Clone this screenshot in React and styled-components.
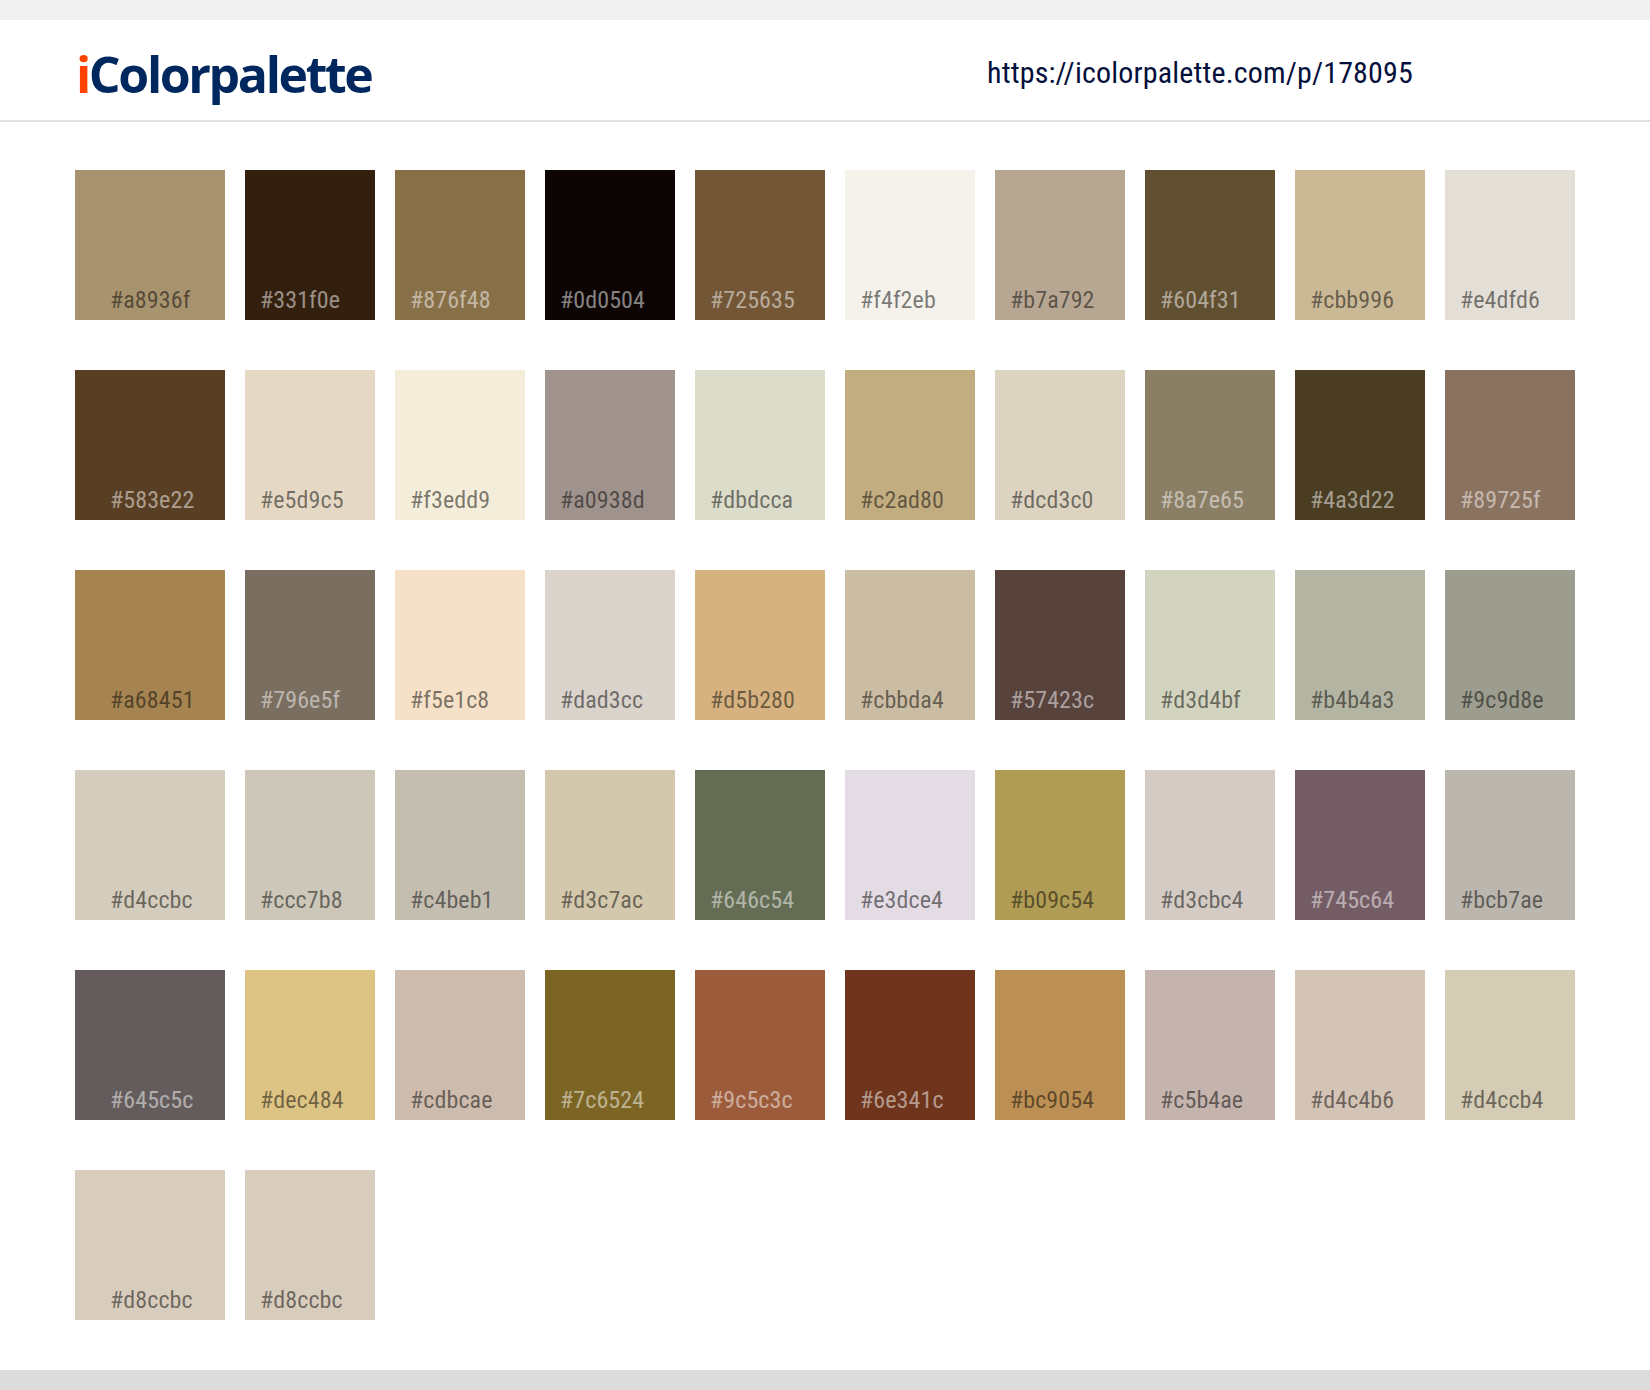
import styled, { createGlobalStyle } from 'styled-components';

const COLORS = [
  'a8936f', '331f0e', '876f48', '0d0504', '725635', 'f4f2eb', 'b7a792', '604f31', 'cbb996', 'e4dfd6',
  '583e22', 'e5d9c5', 'f3edd9', 'a0938d', 'dbdcca', 'c2ad80', 'dcd3c0', '8a7e65', '4a3d22', '89725f',
  'a68451', '796e5f', 'f5e1c8', 'dad3cc', 'd5b280', 'cbbda4', '57423c', 'd3d4bf', 'b4b4a3', '9c9d8e',
  'd4ccbc', 'ccc7b8', 'c4beb1', 'd3c7ac', '646c54', 'e3dce4', 'b09c54', 'd3cbc4', '745c64', 'bcb7ae',
  '645c5c', 'dec484', 'cdbcae', '7c6524', '9c5c3c', '6e341c', 'bc9054', 'c5b4ae', 'd4c4b6', 'd4ccb4',
  'd8ccbc', 'd8ccbc',
];

function isDark(hex) {
  const r = parseInt(hex.slice(0, 2), 16);
  const g = parseInt(hex.slice(2, 4), 16);
  const b = parseInt(hex.slice(4, 6), 16);
  return 0.299 * r + 0.587 * g + 0.114 * b < 130;
}

export default function App() {
  return (
    <>
      <GlobalStyle />
      <TopStrip />
      <Header>
        <Logo><LogoDot>i</LogoDot>Colorpalette</Logo>
        <PageUrl>https://icolorpalette.com/p/178095</PageUrl>
      </Header>
      <Palette>
        {COLORS.map((hex, i) => (
          <Swatch key={i} $hex={hex} $first={i % 10 === 0}>
            <HexLabel $light={isDark(hex)}>#{hex}</HexLabel>
          </Swatch>
        ))}
      </Palette>
      <Footer />
    </>
  );
}

const GlobalStyle = createGlobalStyle`
  body {
    margin: 0;
    background-color: #ffffff;
    font-family: Roboto, "Liberation Sans", sans-serif;
  }
`;

const TopStrip = styled.div`
  height: 20px;
  background-color: #f0f0f0;
`;

const Header = styled.header`
  height: 100px;
  padding-left: 76px;
  display: grid;
  grid-template-columns: 911px 1fr;
  align-items: center;
  border-bottom: 2px solid #e0e0e0;
`;

const Logo = styled.div`
  font-family: "Open Sans", sans-serif;
  font-weight: 700;
  font-size: 50px;
  line-height: 1;
  letter-spacing: -2.4px;
  color: #00285e;
  padding-top: 7px;
`;

const LogoDot = styled.span`
  color: #ff4200;
`;

const PageUrl = styled.div`
  font-size: 30px;
  line-height: 1;
  color: #050f3c;
  letter-spacing: 0.15px;
  font-stretch: condensed;
  padding-top: 6px;
`;

const Palette = styled.main`
  padding: 48px 75px 50px;
  display: grid;
  grid-template-columns: 150px repeat(9, 130px);
  grid-auto-rows: 150px;
  gap: 50px 20px;
`;

const Swatch = styled.div`
  background-color: #${(props) => props.$hex};
  display: flex;
  align-items: flex-end;
  padding: 0 0 8px ${(props) => (props.$first ? '35px' : '15px')};
`;

const HexLabel = styled.span`
  font-size: 24px;
  line-height: 1;
  letter-spacing: 0.1px;
  font-stretch: condensed;
  color: ${(props) => (props.$light ? 'rgba(255, 255, 255, 0.5)' : 'rgba(0, 0, 0, 0.5)')};
`;

const Footer = styled.div`
  height: 20px;
  background-color: #dcdcdc;
`;
